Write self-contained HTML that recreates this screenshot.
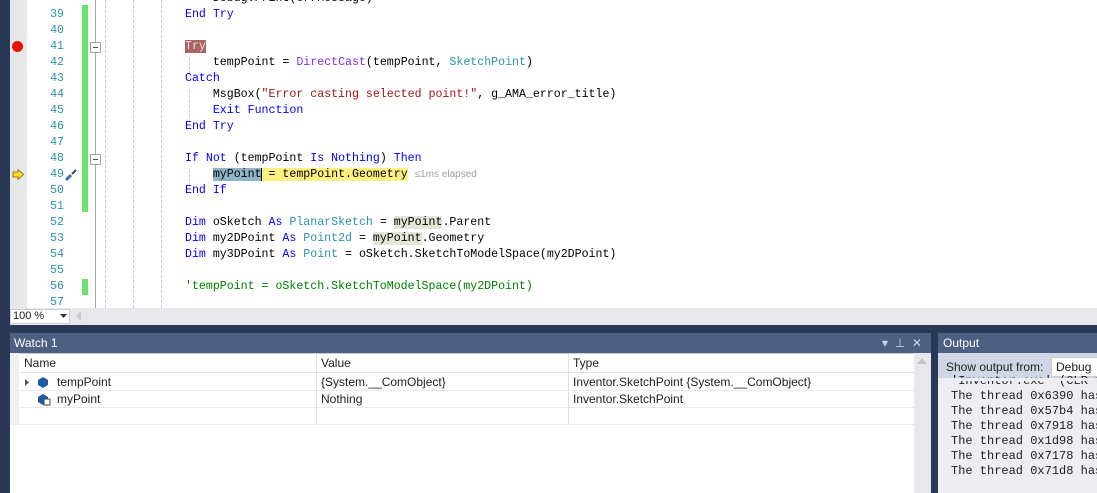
<!DOCTYPE html>
<html><head><style>
*{margin:0;padding:0;box-sizing:border-box}
body{width:1097px;height:493px;background:#293955;position:relative;overflow:hidden;font-family:"Liberation Sans",sans-serif}
.abs{position:absolute}
.code{font-family:"Liberation Mono",monospace;font-size:11.6px;line-height:16px;white-space:pre;color:#000}
.ln{position:absolute;left:27px;width:37px;text-align:right;font-family:"Liberation Mono",monospace;font-size:11.6px;line-height:16px;color:#2b91af}
.k{color:#0000ff}.t{color:#2b91af}.s{color:#a31515}.p{color:#8a2be2}.c{color:#008000}
.ref{background:#e2e6d6}
.g{font-size:12px;color:#1e1e1e}
#ed{position:absolute;left:0;top:2px;width:1097px;height:306px;overflow:visible}
</style></head><body>
<!-- editor -->
<div class="abs" style="left:10px;top:0;width:1087px;height:308px;background:#fff"></div>
<div class="abs" style="left:10px;top:0;width:17px;height:308px;background:#e6e7e8"></div>
<div class="abs" style="left:82px;top:5px;width:6px;height:207px;background:#6ce26c"></div>
<div class="abs" style="left:82px;top:279px;width:6px;height:16px;background:#6ce26c"></div>
<div class="abs" style="left:95px;top:0;width:1px;height:308px;background:#a5a5a5"></div>
<div class="abs" style="left:105px;top:0;height:308px;border-left:1px dashed #c8c8c8"></div>
<div class="abs" style="left:133px;top:0;height:308px;border-left:1px dashed #c8c8c8"></div>
<div class="abs" style="left:161px;top:0;height:308px;border-left:1px dashed #c8c8c8"></div>
<div id="ed">
<div class="abs" style="left:90px;top:40px;width:11px;height:11px;border:1px solid #a5a5a5;background:#fff"></div>
<div class="abs" style="left:93px;top:45px;width:5px;height:1px;background:#555"></div>
<div class="abs" style="left:90px;top:152px;width:11px;height:11px;border:1px solid #a5a5a5;background:#fff"></div>
<div class="abs" style="left:93px;top:157px;width:5px;height:1px;background:#555"></div>
<div class="abs" style="left:189px;top:56px;height:16px;border-left:1px dashed #c8c8c8"></div>
<div class="abs" style="left:189px;top:88px;height:32px;border-left:1px dashed #c8c8c8"></div>
<div class="abs" style="left:189px;top:168px;height:16px;border-left:1px dashed #c8c8c8"></div>
<div class="abs" style="left:12px;top:39px;width:11px;height:11px;border-radius:50%;background:#e51400"></div>
<svg class="abs" style="left:12px;top:167px" width="13" height="11"><path d="M1 3h5V0.5L11.5 5.5 6 10.5V8H1z" fill="#ffdb35" stroke="#9b7d00" stroke-width="1"/></svg>
<svg class="abs" style="left:64px;top:166px" width="14" height="14"><path d="M2 12l5-5" stroke="#3a6fc4" stroke-width="3"/><path d="M8 6l4-4" stroke="#444" stroke-width="2"/></svg>
<div class="ln" style="top:5px">39</div><div class="ln" style="top:21px">40</div><div class="ln" style="top:37px">41</div><div class="ln" style="top:53px">42</div><div class="ln" style="top:69px">43</div><div class="ln" style="top:85px">44</div><div class="ln" style="top:101px">45</div><div class="ln" style="top:117px">46</div><div class="ln" style="top:133px">47</div><div class="ln" style="top:149px">48</div><div class="ln" style="top:165px">49</div><div class="ln" style="top:181px">50</div><div class="ln" style="top:197px">51</div><div class="ln" style="top:213px">52</div><div class="ln" style="top:229px">53</div><div class="ln" style="top:245px">54</div><div class="ln" style="top:261px">55</div><div class="ln" style="top:277px">56</div><div class="ln" style="top:293px">57</div>
<div class="abs code" style="left:185px;top:-11px">    Debug.Print(errMessage)</div>
<div class="abs code" style="left:185px;top:5px"><span class="k">End Try</span></div>
<div class="abs code" style="left:185px;top:37px"><span style="background:#ab6464;color:#f0dede">Try</span></div>
<div class="abs code" style="left:185px;top:53px">    tempPoint = <span class="p">DirectCast</span>(tempPoint, <span class="t">SketchPoint</span>)</div>
<div class="abs code" style="left:185px;top:69px"><span class="k">Catch</span></div>
<div class="abs code" style="left:185px;top:85px">    MsgBox(<span class="s">"Error casting selected point!"</span>, g_AMA_error_title)</div>
<div class="abs code" style="left:185px;top:101px">    <span class="k">Exit Function</span></div>
<div class="abs code" style="left:185px;top:117px"><span class="k">End Try</span></div>
<div class="abs code" style="left:185px;top:149px"><span class="k">If Not</span> (tempPoint <span class="k">Is Nothing</span>) <span class="k">Then</span></div>
<div class="abs code" style="left:185px;top:165px">    <span style="background:#8fb4c8">myPoint</span><span style="background:#fff181;border-left:1px solid #000;margin-left:-1px"> = tempPoint.Geometry</span> <span style="font-family:'Liberation Sans';font-size:10px;color:#a0a0a0">≤1ms elapsed</span></div>
<div class="abs code" style="left:185px;top:181px"><span class="k">End If</span></div>
<div class="abs code" style="left:185px;top:213px"><span class="k">Dim</span> oSketch <span class="k">As</span> <span class="t">PlanarSketch</span> = <span class="ref">myPoint</span>.Parent</div>
<div class="abs code" style="left:185px;top:229px"><span class="k">Dim</span> my2DPoint <span class="k">As</span> <span class="t">Point2d</span> = <span class="ref">myPoint</span>.Geometry</div>
<div class="abs code" style="left:185px;top:245px"><span class="k">Dim</span> my3DPoint <span class="k">As</span> <span class="t">Point</span> = oSketch.SketchToModelSpace(my2DPoint)</div>
<div class="abs code" style="left:185px;top:277px"><span class="c">'tempPoint = oSketch.SketchToModelSpace(my2DPoint)</span></div>
</div>
<!-- hscroll row -->
<div class="abs" style="left:10px;top:308px;width:1087px;height:17px;background:#e8e8ec"></div>
<div class="abs g" style="left:10px;top:309px;width:60px;height:15px;background:#fff;border:1px solid #ccc;font-size:11px;line-height:13px;padding-left:2px">100 %</div>
<svg class="abs" style="left:60px;top:314px" width="7" height="4"><path d="M0 0h7L3.5 4z" fill="#333"/></svg>
<svg class="abs" style="left:76px;top:311px" width="5" height="10"><path d="M5 0v10L0 5z" fill="#c8c8cc"/></svg>
<!-- watch -->
<div class="abs" style="left:10px;top:333px;width:921px;height:160px;background:#fff"></div>
<div class="abs" style="left:10px;top:333px;width:921px;height:20px;background:#4d6082;color:#fff;font-size:12px;line-height:20px;padding-left:4px">Watch 1</div>
<div class="abs" style="left:882px;top:333px;color:#cfd6e5;font-size:12px;line-height:20px">▾&nbsp;&nbsp;⊥&nbsp;&nbsp;✕</div>
<div class="abs" style="left:914px;top:353px;width:17px;height:140px;background:#e8e8ec"></div>
<svg class="abs" style="left:917px;top:358px" width="10" height="6"><path d="M0 6L5 0 10 6z" fill="#c2c3c9"/></svg>
<div class="abs" style="left:10px;top:353px;width:904px;height:1px;background:#ccc"></div>
<div class="abs" style="left:10px;top:353px;width:9px;height:72px;background:#f0f0f0"></div>
<div class="abs" style="left:19px;top:372px;width:895px;height:1px;background:#e0e0e0"></div>
<div class="abs" style="left:19px;top:390px;width:895px;height:1px;background:#eaeaea"></div>
<div class="abs" style="left:19px;top:407px;width:895px;height:1px;background:#eaeaea"></div>
<div class="abs" style="left:19px;top:424px;width:895px;height:1px;background:#eaeaea"></div>
<div class="abs" style="left:316px;top:354px;width:1px;height:71px;background:#e0e0e0"></div>
<div class="abs" style="left:568px;top:354px;width:1px;height:71px;background:#e0e0e0"></div>
<div class="abs g" style="left:24px;top:356px">Name</div>
<div class="abs g" style="left:321px;top:356px">Value</div>
<div class="abs g" style="left:573px;top:356px">Type</div>
<svg class="abs" style="left:25px;top:379px" width="4" height="7"><path d="M0 0v7L4 3.5z" fill="#555"/></svg>
<svg class="abs" style="left:37px;top:376px" width="12" height="12"><path d="M1 4l5-3 5 3v5l-5 3-5-3z" fill="#1c5aa6"/></svg>
<svg class="abs" style="left:37px;top:393px" width="14" height="13"><path d="M1 4l5-3 5 3v5l-5 3-5-3z" fill="#1c5aa6"/><rect x="7" y="6" width="6" height="6" fill="#fff" stroke="#444"/></svg>
<div class="abs g" style="left:57px;top:375px">tempPoint</div>
<div class="abs g" style="left:57px;top:392px">myPoint</div>
<div class="abs g" style="left:321px;top:375px">{System.__ComObject}</div>
<div class="abs g" style="left:321px;top:392px">Nothing</div>
<div class="abs g" style="left:573px;top:375px">Inventor.SketchPoint {System.__ComObject}</div>
<div class="abs g" style="left:573px;top:392px">Inventor.SketchPoint</div>
<!-- output -->
<div class="abs" style="left:938px;top:333px;width:159px;height:160px;background:#eeeef2"></div>
<div class="abs" style="left:938px;top:333px;width:159px;height:20px;background:#4d6082;color:#fff;font-size:12px;line-height:20px;padding-left:5px">Output</div>
<div class="abs" style="left:938px;top:353px;width:159px;height:25px;background:#cfd6e5"></div>
<div class="abs g" style="left:946px;top:360px">Show output from:</div>
<div class="abs g" style="left:1051px;top:357px;width:50px;height:20px;background:#fff;border:1px solid #ccc;padding:2px 0 0 4px">Debug</div>
<div class="abs code" style="left:951px;top:374px;font-size:12px;line-height:15px;color:#1e1e1e">'Inventor.exe' (CLR v
The thread 0x6390 has
The thread 0x57b4 has
The thread 0x7918 has
The thread 0x1d98 has
The thread 0x7178 has
The thread 0x71d8 has</div>
<div class="abs" style="left:938px;top:378px;width:159px;height:3px;background:#eeeef2"></div>
</body></html>
